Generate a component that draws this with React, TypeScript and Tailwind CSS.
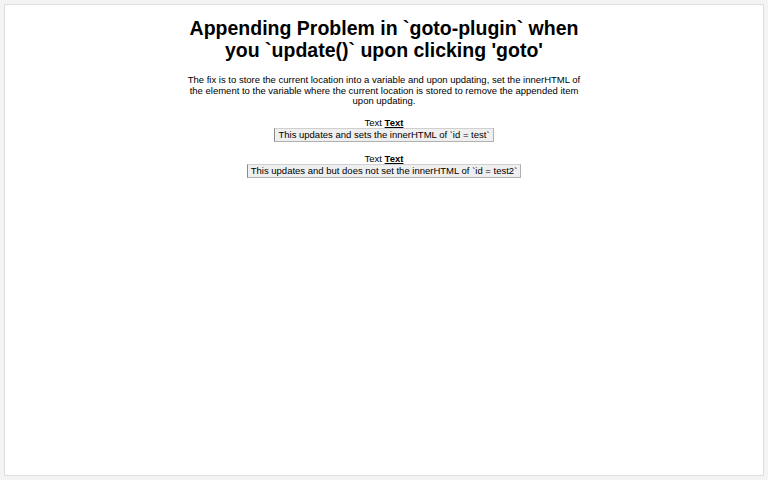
export default function App() {
  return (
    <div className="w-[768px] h-[480px] bg-[#f4f4f4] p-[4px] font-['Liberation_Sans',Arial,sans-serif] text-black">
      <div className="h-full bg-white border border-[#dedede] flex flex-col items-center pt-[12px]">
        <h1 className="w-[400px] text-center text-[19.5px] leading-[22px] font-bold">
          Appending Problem in `goto-plugin` when you `update()` upon clicking 'goto'
        </h1>
        <p className="w-[400px] mt-[14px] text-center text-[9.5px] leading-[10.5px]">
          The fix is to store the current location into a variable and upon updating, set the innerHTML of the
          element to the variable where the current location is stored to remove the appended item upon updating.
        </p>
        <div className="mt-[10px] flex flex-col items-center">
          <div className="text-[9.5px] leading-[11px]">
            Text <span className="font-bold underline">Text</span>
          </div>
          <button className="mt-[0px] px-[3px] h-[14px] text-[9.5px] leading-[12px] bg-[#efefef] border border-t-[#d0d0d0] border-l-[#8a8a8a] border-r-[#b0b0b0] border-b-[#b0b0b0]">
            This updates and sets the innerHTML of `id = test`
          </button>
        </div>
        <div className="mt-[11px] flex flex-col items-center">
          <div className="text-[9.5px] leading-[11px]">
            Text <span className="font-bold underline">Text</span>
          </div>
          <button className="mt-[0px] px-[3px] h-[14px] text-[9.5px] leading-[12px] bg-[#efefef] border border-t-[#d0d0d0] border-l-[#8a8a8a] border-r-[#b0b0b0] border-b-[#b0b0b0]">
            This updates and but does not set the innerHTML of `id = test2`
          </button>
        </div>
      </div>
    </div>
  );
}
